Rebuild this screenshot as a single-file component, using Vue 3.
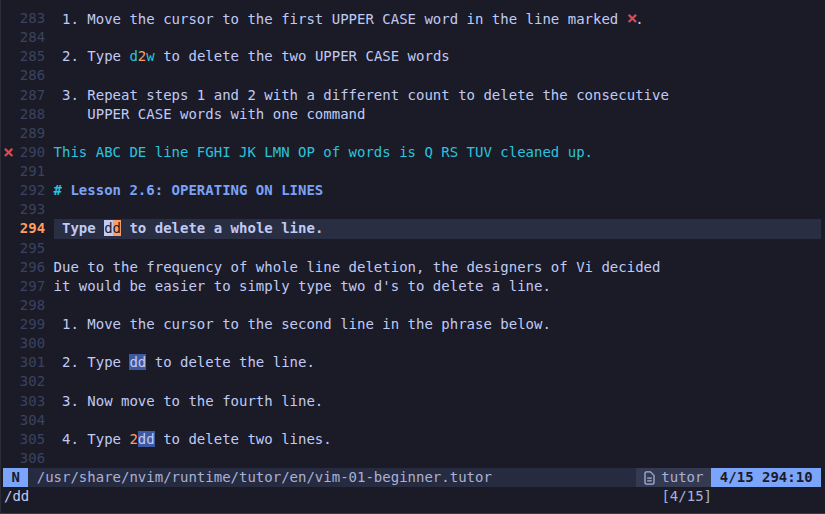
<script setup>
// buffer lines of the tutor, each one a list of coloured pieces
const lines = [
  { n: 283, parts: [[' 1. Move the cursor to the first UPPER CASE word in the line marked '], ['×', 'mark'], ['.']] },
  { n: 284 },
  { n: 285, parts: [[' 2. Type '], ['d', 'cyan'], ['2', 'orange'], ['w', 'cyan'], [' to delete the two UPPER CASE words']] },
  { n: 286 },
  { n: 287, parts: [[' 3. Repeat steps 1 and 2 with a different count to delete the consecutive']] },
  { n: 288, parts: [['    UPPER CASE words with one command']] },
  { n: 289 },
  { n: 290, sign: true, parts: [['This ABC DE line FGHI JK LMN OP of words is Q RS TUV cleaned up.', 'teal']] },
  { n: 291 },
  { n: 292, parts: [['# ', 'teal bold'], ['Lesson 2.6: OPERATING ON LINES', 'blue bold']] },
  { n: 293 },
  { n: 294, current: true, parts: [[' Type ', 'bold'], ['d', 'cursor'], ['d', 'inc'], [' to delete a whole line.', 'bold']] },
  { n: 295 },
  { n: 296, parts: [['Due to the frequency of whole line deletion, the designers of Vi decided']] },
  { n: 297, parts: [["it would be easier to simply type two d's to delete a line."]] },
  { n: 298 },
  { n: 299, parts: [[' 1. Move the cursor to the second line in the phrase below.']] },
  { n: 300 },
  { n: 301, parts: [[' 2. Type '], ['dd', 'search'], [' to delete the line.']] },
  { n: 302 },
  { n: 303, parts: [[' 3. Now move to the fourth line.']] },
  { n: 304 },
  { n: 305, parts: [[' 4. Type '], ['2', 'orange'], ['dd', 'search'], [' to delete two lines.']] },
  { n: 306 }
]
</script>

<template>
  <div class="screen">
    <div class="buffer">
      <div v-for="line in lines" :key="line.n" class="row">
        <span class="sign"><span v-if="line.sign" class="mark">×</span></span>
        <span :class="['num', { current: line.current }]">{{ line.n }}</span>
        <span :class="['text', { cursorline: line.current }]"><span
          v-for="(p, i) in line.parts" :key="i" :class="p[1]">{{ p[0] }}</span></span>
      </div>
    </div>

    <div class="status">
      <span class="mode">N</span>
      <span class="path">/usr/share/nvim/runtime/tutor/en/vim-01-beginner.tutor</span>
      <span class="filetype">
        <svg class="file-icon" width="11" height="14" viewBox="0 0 11 14" fill="none" stroke="currentColor" stroke-width="1.3">
          <path d="M1 2.2 a1.4 1.4 0 0 1 1.4-1.4 h4 l3.6 3.6 v7.4 a1.4 1.4 0 0 1-1.4 1.4 h-6.2 a1.4 1.4 0 0 1-1.4-1.4z" />
          <path d="M3.2 7.2 h4.6 M3.2 9.8 h4.6" />
        </svg>
        <span>tutor</span>
      </span>
      <span class="position">4/15 294:10</span>
    </div>

    <div class="cmdline">
      <span>/dd</span>
      <span class="count">[4/15]</span>
    </div>
  </div>
</template>

<style scoped>
.screen {
  width: 825px;
  height: 514px;
  box-sizing: border-box;
  padding: 9px 4px 0 2px;
  border-left: 1px solid #2b2c36;
  border-bottom: 1px solid #3a3b44;
  background: #1a1b26;
  color: #c0caf5;
  font-family: "DejaVu Sans Mono", monospace;
  font-size: 14px;
  line-height: 19.13px;
  overflow: hidden;
}

.row {
  display: flex;
  height: 19.13px;
  white-space: pre;
}

.sign {
  width: 16.86px;
  flex-shrink: 0;
}

.num {
  width: 25.29px;
  flex-shrink: 0;
  text-align: right;
  color: #3b4261;
  margin-right: 8.43px;
}

.num.current {
  color: #ff9e64;
  font-weight: bold;
}

.text {
  flex: 1;
}

.cursorline {
  background: #292e42;
}

/* bigger glyph squeezed back into one cell */
.mark {
  color: #e5484d;
  font-size: 18px;
  font-weight: bold;
  letter-spacing: -2.4px;
  line-height: 17px;
}

.cyan { color: #2ac3de; }
.teal { color: #2ac3de; }
.orange { color: #ff9e64; }
.blue { color: #7aa2f7; }
.bold { font-weight: bold; }

.cursor {
  background: #c0caf5;
  color: #1a1b26;
}

.inc {
  background: #ff9e64;
  color: #1a1b26;
}

.search {
  background: #3d59a1;
  color: #c0caf5;
}

.status {
  display: flex;
  height: 19.13px;
  background: #272b40;
  white-space: pre;
}

.mode {
  width: 25.29px;
  text-align: center;
  background: #7aa5fb;
  color: #1a1b26;
  font-weight: bold;
}

.path {
  flex: 1;
  padding-left: 8.43px;
  color: #a9b1d6;
}

.filetype {
  display: flex;
  align-items: center;
  gap: 6px;
  padding: 0 8px;
  background: #343a52;
  color: #a9b1d6;
}

.file-icon {
  flex-shrink: 0;
}

.position {
  padding: 0 8.43px;
  background: #7aa5fb;
  color: #1a1b26;
  font-weight: bold;
}

.cmdline {
  display: flex;
  justify-content: space-between;
  height: 19.13px;
  padding-left: 1px;
  padding-right: 109px;
}

.count {
  color: #a9b1d6;
}
</style>
